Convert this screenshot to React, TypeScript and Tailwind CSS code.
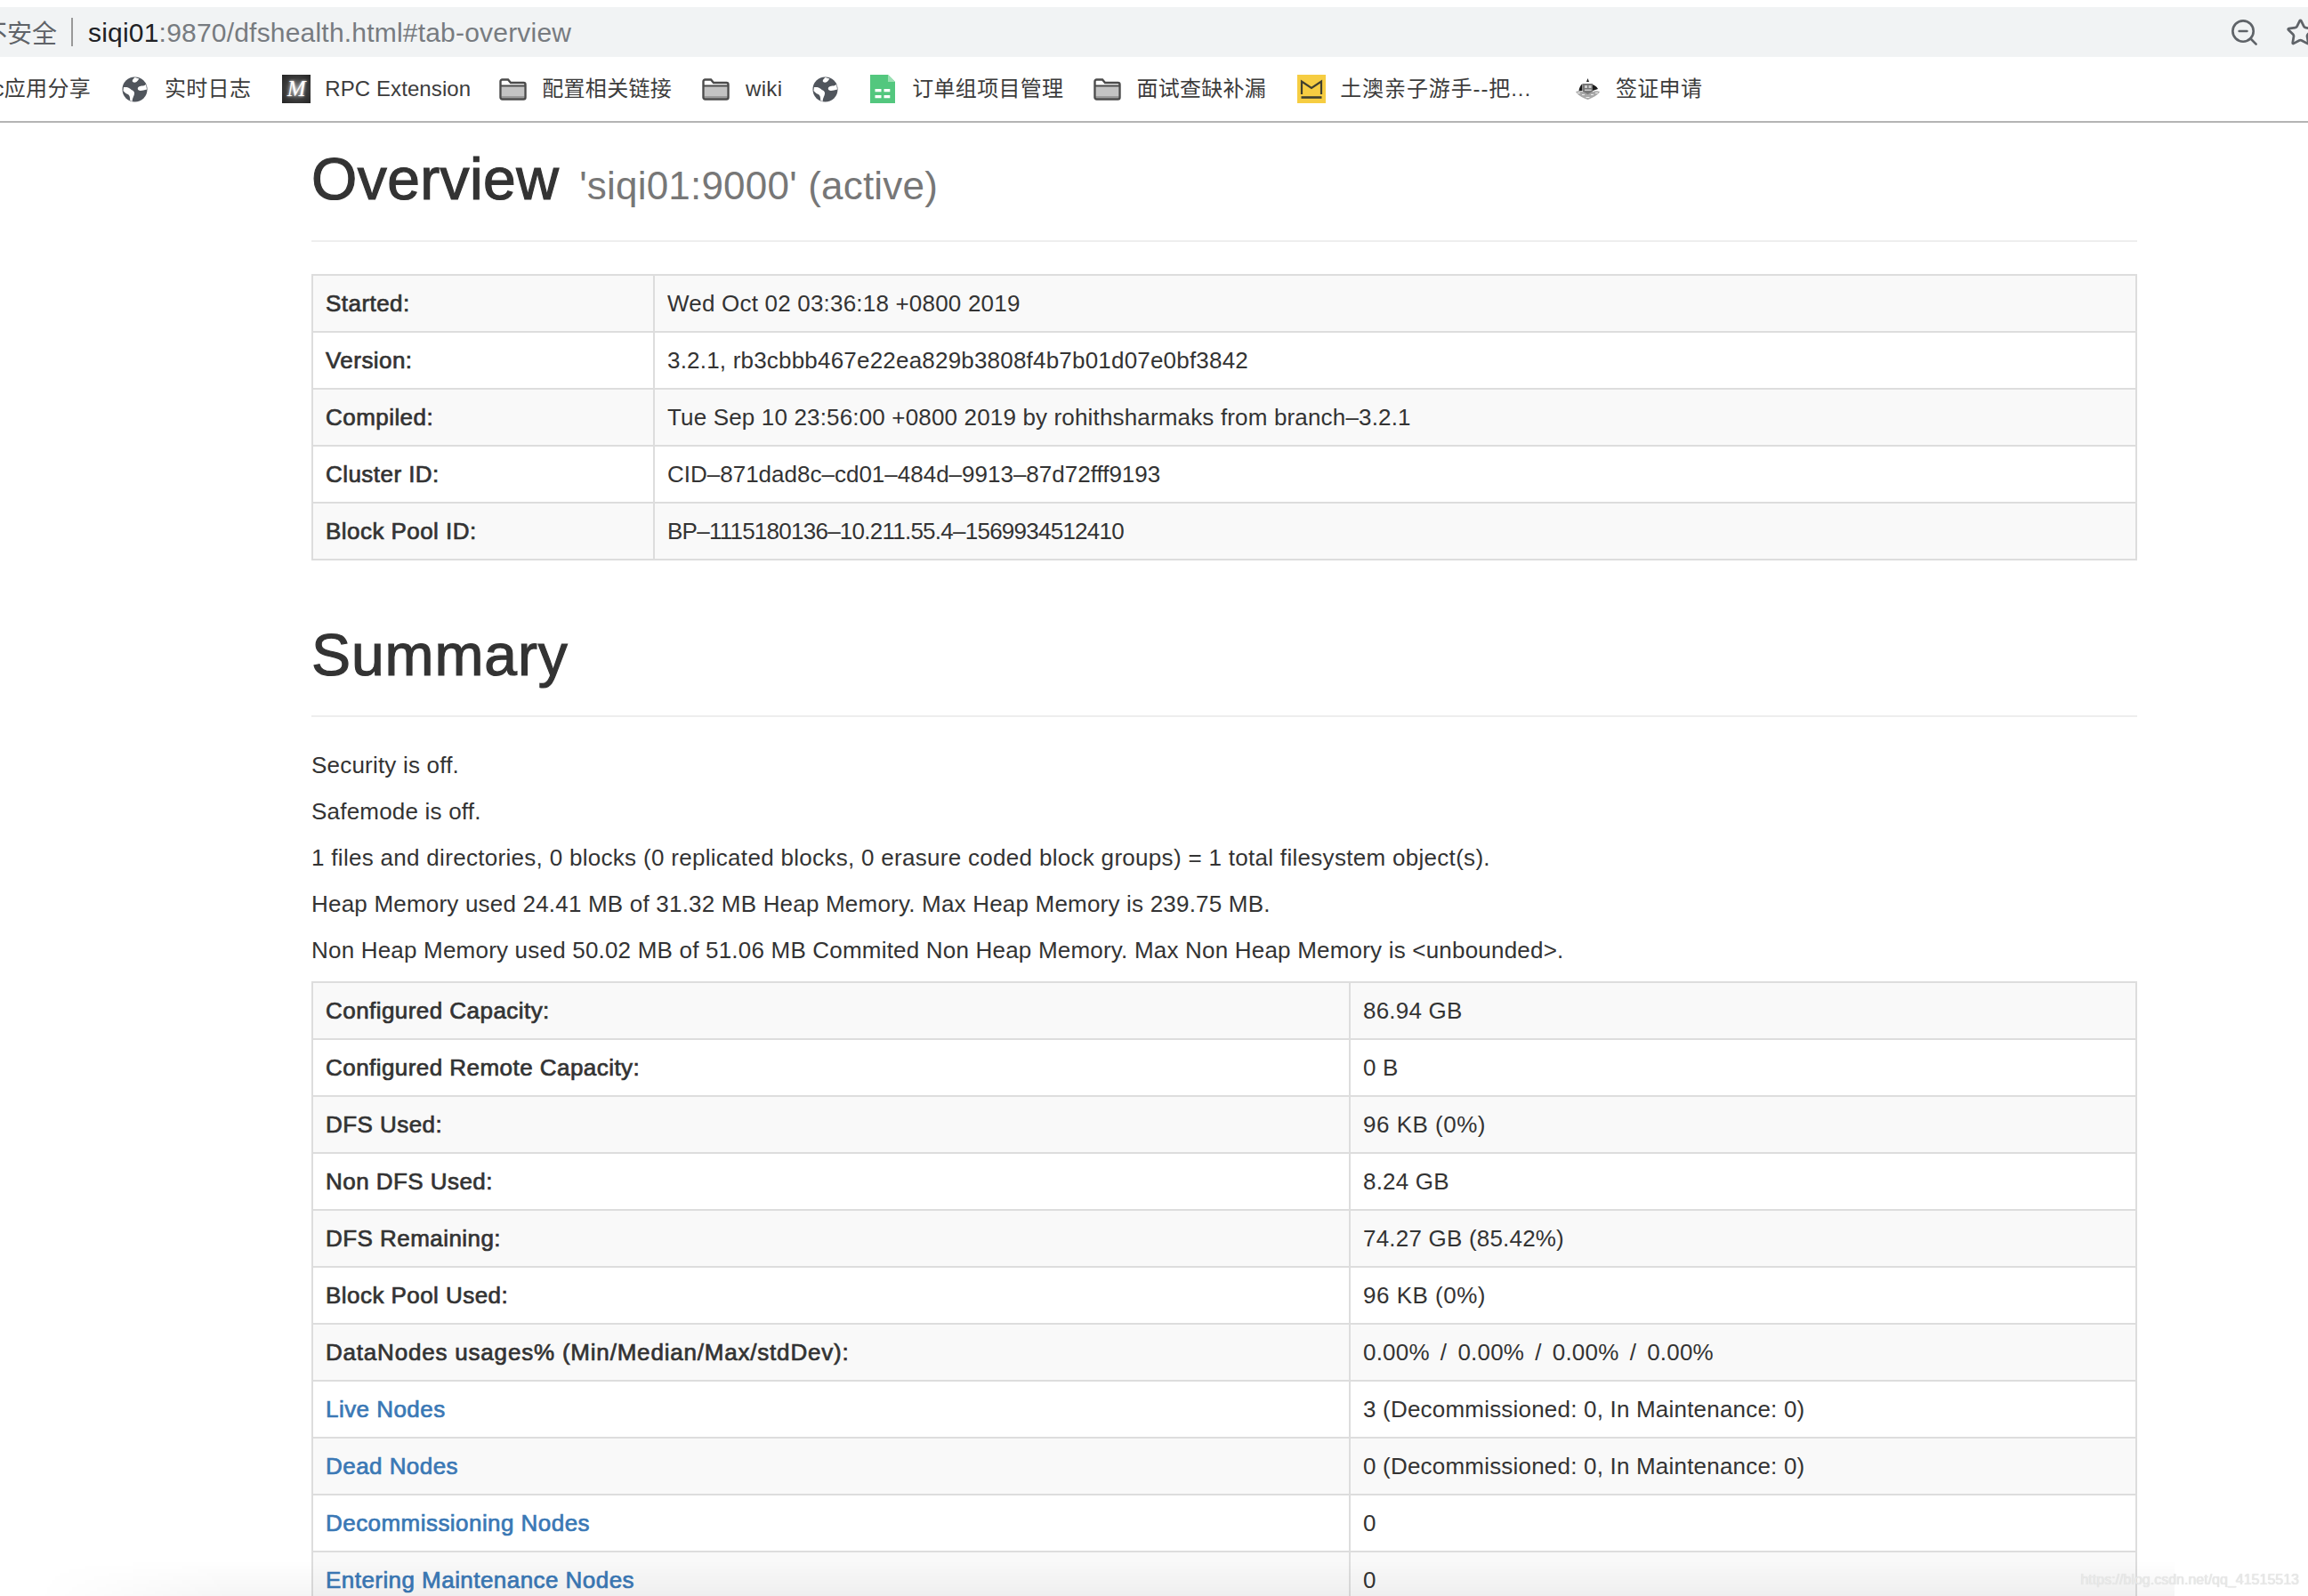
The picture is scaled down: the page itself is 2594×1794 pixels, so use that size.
import React from "react";
import { ZoomOut, Star } from "lucide-react";

const sans = "font-['Liberation_Sans',Arial,sans-serif]";
const cjk = "font-['Liberation_Sans','Noto_Sans_CJK_SC',sans-serif]";

const GlobeIcon = () => (
  <svg width="29" height="29" viewBox="0 0 30 30" className="shrink-0">
    <circle cx="15" cy="15" r="14.5" fill="#50555c" />
    <path d="M2 12.5C5 12 8 12.5 10 14.5 12 16.5 14.5 16.5 14.5 19.5 14.5 22.5 12.5 24 12 29L9.5 28C9.5 24 9 21.5 6.5 20.5 4.5 19.5 3 18.5 1.5 16.5Z" fill="#fff" />
    <path d="M28 9C25 12 21 10 19 12.5 17.5 14.5 19 16.5 21.5 16.5 24 16.5 26 15.5 29 15Z" fill="#fff" />
    <path d="M15 1C13 3 11 5 13 6.5 15 8 18 6 20 2.5Z" fill="#fff" />
  </svg>
);

const FolderIcon = () => (
  <svg width="31" height="25" viewBox="0 0 31 25" className="shrink-0">
    <path d="M1.5 3.5a2 2 0 012-2H10L13 5H27.5a2 2 0 012 2V21.5a2 2 0 01-2 2H3.5a2 2 0 01-2-2Z" fill="#fff" />
    <rect x="2.5" y="9" width="26" height="13.5" fill="#c3c3c3" />
    <rect x="2.5" y="20" width="26" height="2.5" fill="#9a9a9a" />
    <path d="M1.5 8.5H29.5" stroke="#4b4b4b" strokeWidth="2" />
    <path d="M1.5 3.5a2 2 0 012-2H10L13 5H27.5a2 2 0 012 2V21.5a2 2 0 01-2 2H3.5a2 2 0 01-2-2Z" fill="none" stroke="#4b4b4b" strokeWidth="2.4" />
  </svg>
);

const SheetIcon = () => (
  <svg width="28" height="32" viewBox="0 0 28 32" className="shrink-0">
    <path d="M0 0H20L28 8V32H0Z" fill="#53c77e" />
    <path d="M20 0L28 8H20Z" fill="#9ae0b2" />
    <path d="M5.5 16H12.5V19.3H5.5ZM15.5 16H22.3V19.3H15.5ZM5.5 23H12.5V26.3H5.5ZM15.5 23H22.3V26.3H15.5Z" fill="#fff" />
  </svg>
);

const MailIcon = () => (
  <svg width="32" height="32" viewBox="0 0 32 32" className="shrink-0">
    <rect width="32" height="32" fill="#f6cd42" />
    <path d="M5 22V7.5L16 15 27 7.5V22" fill="none" stroke="#40402f" strokeWidth="2.2" />
    <path d="M4.5 25.5H27.5" stroke="#40402f" strokeWidth="2.6" />
  </svg>
);

const EmblemIcon = () => (
  <svg width="29" height="24" viewBox="0 0 29 24" className="shrink-0">
    <path d="M14.5 0L16 4H13Z" fill="#222" />
    <path d="M1 15C5 13 9 15 14.5 16 20 15 24 13 28 15 26 19 20 22 14.5 24 9 22 3 19 1 15Z" fill="#a8a8a8" />
    <path d="M9 6H20V15L14.5 18 9 15Z" fill="#777" />
    <path d="M11 8H14V11H11ZM15.5 8H18.5V11H15.5ZM11 12.5H18.5V14H11Z" fill="#ccc" />
    <path d="M4.5 14C5 10 6.5 8 8.5 6V14Z" fill="#1c1c1c" />
    <path d="M20 7C22 8 24.5 9 26 12L20 14Z" fill="#1c1c1c" />
    <path d="M3 16H6V17H3ZM8 18H11V19H8ZM18 18H21V19H18ZM23 16H26V17H23ZM12.5 21H16.5V22H12.5Z" fill="#eee" />
  </svg>
);

const RpcIcon = () => (
  <div className="w-[32px] h-[32px] shrink-0 bg-[radial-gradient(circle,#8a8a8a_0%,#3a3a3a_55%,#242424_100%)] text-white text-[25px] leading-[32px] italic text-center font-['Liberation_Serif',serif] [text-shadow:0_0_3px_#fff]">
    M
  </div>
);

const Bm = ({ icon, label, ml, gap = "ml-[17px]", track = "tracking-[0.3px]" }: { icon: React.ReactNode; label: string; ml: string; gap?: string; track?: string }) => (
  <div className={`flex items-center shrink-0 ${ml}`}>
    {icon}
    <span className={`${gap} ${track} text-[24px] text-[#3c3c3c] ${cjk} whitespace-nowrap`}>{label}</span>
  </div>
);

const t1: [string, string, string?][] = [
  ["Started:", "Wed Oct 02 03:36:18 +0800 2019"],
  ["Version:", "3.2.1, rb3cbbb467e22ea829b3808f4b7b01d07e0bf3842"],
  ["Compiled:", "Tue Sep 10 23:56:00 +0800 2019 by rohithsharmaks from branch–3.2.1", "tracking-[0.16px]"],
  ["Cluster ID:", "CID–871dad8c–cd01–484d–9913–87d72fff9193", "tracking-normal"],
  ["Block Pool ID:", "BP–1115180136–10.211.55.4–1569934512410", "tracking-[-0.75px]"],
];
const t2: [string, string, boolean?, string?, string?][] = [
  ["Configured Capacity:", "86.94 GB"],
  ["Configured Remote Capacity:", "0 B"],
  ["DFS Used:", "96 KB (0%)", false, undefined, "tracking-[0.5px]"],
  ["Non DFS Used:", "8.24 GB"],
  ["DFS Remaining:", "74.27 GB (85.42%)"],
  ["Block Pool Used:", "96 KB (0%)", false, undefined, "tracking-[0.5px]"],
  ["DataNodes usages% (Min/Median/Max/stdDev):", "0.00% / 0.00% / 0.00% / 0.00%", false, "tracking-[0.8px]", "tracking-[0.2px] [word-spacing:4.7px]"],
  ["Live Nodes", "3 (Decommissioned: 0, In Maintenance: 0)", true],
  ["Dead Nodes", "0 (Decommissioned: 0, In Maintenance: 0)", true],
  ["Decommissioning Nodes", "0", true],
  ["Entering Maintenance Nodes", "0", true],
];

const Row = ({ a, b, i, w, link, track = "tracking-[0.2px]", labelTrack = "tracking-[0.45px]" }: { a: string; b: string; i: number; w: string; link?: boolean; track?: string; labelTrack?: string }) => (
  <div className={`flex h-[64px] first:h-[62px] border-t-2 border-[#ddd] first:border-t-0 ${i % 2 === 0 ? "bg-[#f9f9f9]" : "bg-white"}`}>
    <div className={`${w} shrink-0 border-r-2 border-[#ddd] pl-[14px] flex items-center ${labelTrack} [-webkit-text-stroke:0.7px] ${link ? "text-[#3a78b5]" : ""}`}>{a}</div>
    <div className={`flex-1 pl-[14px] flex items-center ${track}`}>{b}</div>
  </div>
);

export default function App() {
  return (
    <div className={`relative w-[2594px] h-[1794px] overflow-hidden bg-white text-[#333] ${sans} text-[26px]`}>
      <div className="h-[8px] bg-white" />
      <div className="h-[56px] bg-[#f1f3f4] flex items-center text-[30px] overflow-hidden">
        <span className="-ml-[20px] text-[28px] text-[#5f6368] font-['Noto_Sans_CJK_SC',sans-serif]">不安全</span>
        <div className="w-[2px] h-[32px] bg-[#999] ml-[16px] mr-[17px]" />
        <span className="text-[#202124] tracking-[0.2px]">siqi01</span>
        <span className="text-[#777b80] tracking-[0.2px]">:9870/dfshealth.html#tab-overview</span>
        <div className="ml-auto flex items-center gap-[29px] -mr-[8px]">
          <ZoomOut size={35} strokeWidth={1.8} className="text-[#5f6368]" />
          <Star size={33} strokeWidth={2} className="text-[#5f6368]" />
        </div>
      </div>
      <div className="h-[74px] border-b-2 border-[#b4b4b4] flex items-center overflow-hidden">
        <div className="w-[102px] shrink-0 overflow-hidden flex justify-end">
          <span className={`text-[24px] text-[#3c3c3c] ${cjk} whitespace-nowrap tracking-[0.3px]`}>c应用分享</span>
        </div>
        <Bm ml="ml-[35px]" gap="ml-[19px]" icon={<GlobeIcon />} label="实时日志" />
        <Bm ml="ml-[35px]" gap="ml-[16px]" icon={<RpcIcon />} label="RPC Extension" track="tracking-[0.1px]" />
        <Bm ml="ml-[32px]" icon={<FolderIcon />} label="配置相关链接" />
        <Bm ml="ml-[34px]" gap="ml-[18px]" icon={<FolderIcon />} label="wiki" />
        <div className="ml-[34px] shrink-0"><GlobeIcon /></div>
        <Bm ml="ml-[36px]" gap="ml-[19px]" icon={<SheetIcon />} label="订单组项目管理" />
        <Bm ml="ml-[34px]" icon={<FolderIcon />} label="面试查缺补漏" />
        <Bm ml="ml-[35px]" gap="ml-[16px]" track="tracking-[0.9px]" icon={<MailIcon />} label="土澳亲子游手--把..." />
        <Bm ml="ml-[49px]" icon={<EmblemIcon />} label="签证申请" />
      </div>
      <div className="ml-[350px] w-[2052px]">
        <div className="h-[134px] border-b-2 border-[#eee] flex items-baseline pt-[21px]">
          <h1 className="text-[66px] leading-[1.3] tracking-[0.4px] [-webkit-text-stroke:1.2px]">Overview</h1>
          <span className="ml-[23px] text-[44px] text-[#777] tracking-[0.2px]">'siqi01:9000' (active)</span>
        </div>
        <div className="mt-[36px] border-2 border-[#ddd]">
          {t1.map((r, i) => <Row key={i} a={r[0]} b={r[1]} i={i} w="w-[384px]" track={r[2]} />)}
        </div>
        <div className="mt-[54px] h-[122px] border-b-2 border-[#eee] pt-[10px]">
          <h1 className="text-[66px] leading-[1.3] tracking-[0.9px] [-webkit-text-stroke:1.2px]">Summary</h1>
        </div>
        <div className="mt-[36px] flex flex-col gap-[16px] leading-[36px] tracking-[0.2px]">
          <p>Security is off.</p>
          <p>Safemode is off.</p>
          <p className="tracking-[0.3px]">1 files and directories, 0 blocks (0 replicated blocks, 0 erasure coded block groups) = 1 total filesystem object(s).</p>
          <p>Heap Memory used 24.41 MB of 31.32 MB Heap Memory. Max Heap Memory is 239.75 MB.</p>
          <p>Non Heap Memory used 50.02 MB of 51.06 MB Commited Non Heap Memory. Max Non Heap Memory is &lt;unbounded&gt;.</p>
        </div>
        <div className="mt-[17px] border-2 border-[#ddd]">
          {t2.map((r, i) => <Row key={i} a={r[0]} b={r[1]} i={i} w="w-[1166px]" link={r[2]} labelTrack={r[3]} track={r[4]} />)}
        </div>
      </div>
      <div className="absolute bottom-0 left-0 right-[150px] h-[40px] bg-linear-to-b from-transparent to-[#0000000a] pointer-events-none [mask-image:linear-gradient(to_right,transparent_40px,black_260px)]" />
      <div className="absolute right-[10px] top-[1765px] text-[16px] leading-[22px] text-[#e9e9e9] [text-shadow:0_0_1px_#d0d0d0]">https://blog.csdn.net/qq_41515513</div>
    </div>
  );
}
